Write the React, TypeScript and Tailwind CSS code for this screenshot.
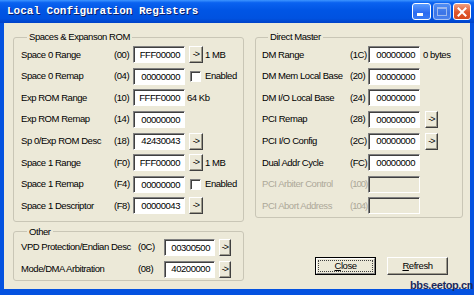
import React from 'react';

const sans = "font-['Liberation_Sans',Arial,sans-serif]";

function Edit({ value, disabled, w = 'w-[52px]' }: { value?: string; disabled?: boolean; w?: string }) {
  return (
    <div
      className={`${w} h-[17px] shrink-0 border border-t-[#808080] border-l-[#808080] border-b-white border-r-white shadow-[inset_1px_1px_0_#404040] ${
        disabled ? 'bg-[#ECE9D8]' : 'bg-white'
      } flex items-center justify-end pr-[4px] leading-none text-black`}
    >
      {value}
    </div>
  );
}

function ArrowBtn({ w = 'w-[14px]', ml = 'ml-[4px]' }: { w?: string; ml?: string }) {
  return (
    <div
      className={`${w} ${ml} h-[17px] shrink-0 border border-t-white border-l-white border-b-[#404040] border-r-[#404040] shadow-[inset_-1px_-1px_0_#9d9a8b] bg-[#ECE9D8] flex items-center justify-center text-[9px] leading-none tracking-[-0.8px] text-black`}
    >
      -&gt;
    </div>
  );
}

function CheckBox() {
  return (
    <div className="ml-[5px] w-[11px] h-[11px] shrink-0 bg-white border border-t-[#808080] border-l-[#808080] border-b-white border-r-white shadow-[inset_1px_1px_0_#404040]" />
  );
}

type Row = {
  label: string;
  code: string;
  value?: string;
  arrow?: boolean;
  note?: string;
  check?: boolean;
  disabled?: boolean;
};

const spaces: Row[] = [
  { label: 'Space 0 Range', code: '(00)', value: 'FFF00000', arrow: true, note: '1 MB' },
  { label: 'Space 0 Remap', code: '(04)', value: '00000000', check: true },
  { label: 'Exp ROM Range', code: '(10)', value: 'FFFF0000', note: '64 Kb' },
  { label: 'Exp ROM Remap', code: '(14)', value: '00000000' },
  { label: 'Sp 0/Exp ROM Desc', code: '(18)', value: '42430043', arrow: true },
  { label: 'Space 1 Range', code: '(F0)', value: 'FFF00000', arrow: true, note: '1 MB' },
  { label: 'Space 1 Remap', code: '(F4)', value: '00000000', check: true },
  { label: 'Space 1 Descriptor', code: '(F8)', value: '00000043', arrow: true },
];

const direct: Row[] = [
  { label: 'DM Range', code: '(1C)', value: '00000000', note: '0 bytes' },
  { label: 'DM Mem Local Base', code: '(20)', value: '00000000' },
  { label: 'DM I/O Local Base', code: '(24)', value: '00000000' },
  { label: 'PCI Remap', code: '(28)', value: '00000000', arrow: true },
  { label: 'PCI I/O Config', code: '(2C)', value: '00000000', arrow: true },
  { label: 'Dual Addr Cycle', code: '(FC)', value: '00000000' },
  { label: 'PCI Arbiter Control', code: '(100)', disabled: true },
  { label: 'PCI Abort Address', code: '(104)', disabled: true },
];

const other: Row[] = [
  { label: 'VPD Protection/Endian Desc', code: '(0C)', value: '00300500', arrow: true },
  { label: 'Mode/DMA Arbitration', code: '(08)', value: '40200000', arrow: true },
];

function Legend({ children, leading = 'leading-[12px]' }: { children: React.ReactNode; leading?: string }) {
  return <legend className={`ml-[6px] px-[2px] ${leading} text-black`}>{children}</legend>;
}

export default function App() {
  return (
    <div className={`relative w-[474px] h-[295px] bg-[#0452e0] flex flex-col overflow-hidden ${sans}`}>
      {/* title bar */}
      <div className="h-[23px] shrink-0 flex items-center pl-[7px] pr-[3px] bg-[linear-gradient(to_bottom,#3d95ff_0%,#0a62f0_12%,#0055e5_45%,#0052e0_80%,#0042c8_100%)]">
        <span className="font-['Liberation_Mono',monospace] font-bold text-[11px] text-white [text-shadow:1px_1px_0_#0a1e6a]">
          Local Configuration Registers
        </span>
        <div className="ml-auto flex gap-[2px]">
          <div className="w-[19px] h-[17px] rounded-[3px] border border-white bg-[linear-gradient(to_bottom,#5a9cff,#2a6af0_60%,#3a7cf5)] flex items-end pl-[4px] pb-[3px]">
            <div className="w-[6px] h-[3px] bg-white" />
          </div>
          <div className="w-[18px] h-[17px] rounded-[3px] border border-[#a9c4f5] bg-[linear-gradient(to_bottom,#4f8ef5,#3b74e6_60%,#4a82ee)] flex items-center justify-center">
            <div className="w-[10px] h-[9px] border border-[#9bb8ee] border-t-[2px]" />
          </div>
          <div className="w-[18px] h-[17px] rounded-[3px] border border-white bg-[linear-gradient(to_bottom,#f0a080,#e0562c_55%,#d84a1e)] flex items-center justify-center">
            <svg width="10" height="10" viewBox="0 0 10 10">
              <path d="M1.5 1.5 L8.5 8.5 M8.5 1.5 L1.5 8.5" stroke="white" strokeWidth="2" strokeLinecap="square" />
            </svg>
          </div>
        </div>
      </div>

      {/* body */}
      <div className="mx-[4px] h-[266px] bg-[#ECE9D8] flex pl-[9px] pr-[7px] gap-[11px] pt-[8px] text-black text-[9.5px] tracking-[-0.45px]">
        {/* left column */}
        <div className="w-[231px] flex flex-col">
          <fieldset className="border border-[#c9c6b6] rounded-[3px] pl-[7px] pt-[1px] pb-[4px]">
            <Legend>Spaces &amp; Expanson ROM</Legend>
            {spaces.map(r => (
              <div key={r.code} className="h-[21.6px] flex items-center">
                <span className="w-[93px] shrink-0 whitespace-nowrap">{r.label}</span>
                <span className="w-[19px] shrink-0">{r.code}</span>
                <Edit value={r.value} />
                {r.arrow && <ArrowBtn />}
                {r.check && (
                  <>
                    <CheckBox />
                    <span className="ml-[4px]">Enabled</span>
                  </>
                )}
                {r.note && <span className="ml-[2px] whitespace-nowrap">{r.note}</span>}
              </div>
            ))}
          </fieldset>

          <fieldset className="mt-[5px] border border-[#c9c6b6] rounded-[3px] pl-[7px]">
            <Legend leading="leading-[10px]">Other</Legend>
            {other.map(r => (
              <div key={r.code} className="h-[21.5px] flex items-center">
                <span className="w-[117px] shrink-0 whitespace-nowrap">{r.label}</span>
                <span className="w-[26px] shrink-0">{r.code}</span>
                <Edit value={r.value} w="w-[51px]" />
                <ArrowBtn w="w-[12px]" />
              </div>
            ))}
          </fieldset>
        </div>

        {/* right column */}
        <div className="w-[208px] flex flex-col">
          <fieldset className="border border-[#c9c6b6] rounded-[3px] pl-[6px] pt-[1px]">
            <Legend>Direct Master</Legend>
            {direct.map(r => (
              <div key={r.code} className={`h-[21.6px] flex items-center ${r.disabled ? 'text-[#aca899]' : ''}`}>
                <span className="w-[88px] shrink-0 whitespace-nowrap">{r.label}</span>
                <span
                  className={`w-[18px] shrink-0 whitespace-nowrap ${r.code.length > 4 ? 'tracking-[-1px]' : ''}`}
                >
                  {r.code}
                </span>
                <Edit value={r.value} disabled={r.disabled} />
                {r.arrow && <ArrowBtn w="w-[13px]" ml="ml-[5px]" />}
                {r.note && <span className="ml-[3px] whitespace-nowrap">{r.note}</span>}
              </div>
            ))}
          </fieldset>

          <div className="mt-[39px] flex justify-end gap-[11px] pr-[15px]">
            <div className="w-[61px] h-[18px] border border-black bg-[#ECE9D8]">
              <div className="h-full border border-t-white border-l-white border-b-[#808080] border-r-[#808080] p-[1px]">
                <div className="h-full border border-dotted border-[#404040] flex items-center justify-center leading-none">
                  <span>
                    <span className="underline">C</span>lose
                  </span>
                </div>
              </div>
            </div>
            <div className="w-[61px] h-[18px] border border-t-white border-l-white border-b-[#404040] border-r-[#404040] shadow-[inset_-1px_-1px_0_#9d9a8b] bg-[#ECE9D8] flex items-center justify-center leading-none">
              <span>
                <span className="underline">R</span>efresh
              </span>
            </div>
          </div>
        </div>
      </div>

      {/* watermark over the frame */}
      <span className="absolute left-[410px] top-[280px] font-bold text-[11px] leading-[11px] tracking-[-0.4px] text-[#1c2a5c]">
        bbs.eetop.cn
      </span>
    </div>
  );
}
